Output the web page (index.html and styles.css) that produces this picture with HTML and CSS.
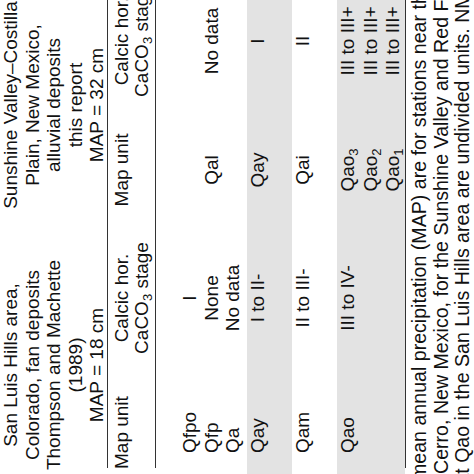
FILE: index.html
```html
<!DOCTYPE html>
<html>
<head>
<meta charset="utf-8">
<link rel="stylesheet" href="styles.css">
</head>
<body>
<div class="page">
  <div class="sheet">
    <div class="groups">
      <div class="grp">San Luis Hills area,<br>Colorado, fan deposits<br>Thompson and Machette<br>(1989)<br>MAP = 18 cm</div>
      <div class="grp">Sunshine Valley–Costilla<br>Plain, New Mexico,<br>alluvial deposits<br>this report<br>MAP = 32 cm</div>
    </div>
    <div class="rule"></div>
    <div class="row subhead">
      <div class="c1">Map unit</div>
      <div class="c2">Calcic hor.<br>CaCO<span class="sub">3</span> stage</div>
      <div class="c3">Map unit</div>
      <div class="c4">Calcic hor.<br>CaCO<span class="sub">3</span> stage</div>
    </div>
    <div class="rule"></div>
    <div class="row r1">
      <div class="c1">Qfpo<br>Qfp<br>Qa</div>
      <div class="c2">I<br>None<br>No data</div>
      <div class="c3 mid">Qal</div>
      <div class="c4 mid">No data</div>
    </div>
    <div class="row r2 shade">
      <div class="c1">Qay</div>
      <div class="c2">I to II-</div>
      <div class="c3">Qay</div>
      <div class="c4">I</div>
    </div>
    <div class="row r3">
      <div class="c1">Qam</div>
      <div class="c2">II to III-</div>
      <div class="c3">Qai</div>
      <div class="c4">II</div>
    </div>
    <div class="row r4 shade">
      <div class="c1">Qao</div>
      <div class="c2">III to IV-</div>
      <div class="c3">Qao<span class="sub">3</span><br>Qao<span class="sub">2</span><br>Qao<span class="sub">1</span></div>
      <div class="c4">III to III+<br>III to III+<br>III to III+</div>
    </div>
    <div class="rule"></div>
    <div class="foot">
      <div class="fl fl1">mean annual precipitation (MAP) are for stations near the town of</div>
      <div class="fl fl2">Cerro, New Mexico, for the Sunshine Valley and Red Fox area</div>
      <div class="fl fl3">that Qao in the San Luis Hills area are undivided units. NM, New Mexico.</div>
    </div>
  </div>
</div>
</body>
</html>
```
FILE: styles.css
```css
html, body {
  margin: 0;
  padding: 0;
  background: #fff;
}

.page {
  width: 474px;
  height: 474px;
  overflow: hidden;
}

.sheet {
  width: 474px;
  height: 474px;
  overflow: hidden;
  transform: rotate(-90deg);
  font-family: "Liberation Sans", Arial, sans-serif;
  font-size: 19px;
  line-height: 21.5px;
  color: #111;
  background: #fff;
}

.groups {
  display: grid;
  grid-template-columns: 218px 302px;
  height: 106.5px;
  text-align: center;
  white-space: nowrap;
}

.rule {
  height: 1.5px;
  margin-left: 6px;
  background: #333;
}

.row {
  display: grid;
  grid-template-columns: 88px 176px 80px 178px;
  white-space: nowrap;
  box-sizing: border-box;
}

.row > div {
  text-align: center;
}

.row > .c1 {
  text-align: left;
  padding-left: 21px;
}

.subhead {
  height: 46.5px;
  padding-top: 4.25px;
  line-height: 19.5px;
}

.subhead > .c1 {
  padding-left: 5px;
}

.r1 {
  height: 91px;
  padding-top: 23.25px;
}

.r1 > .mid {
  padding-top: 21.5px;
}

.r2,
.r3 {
  height: 45px;
}

.r4 {
  height: 67.5px;
  line-height: 22.5px;
}

.shade {
  background: #e3e3e3;
}

.sub {
  font-size: 13px;
  line-height: 0;
  vertical-align: -4px;
}

.foot {
  padding-top: 3.25px;
  white-space: nowrap;
  font-size: 19.6px;
}

.fl1 {
  margin-left: -6px;
}

.fl3 {
  margin-left: -27px;
}
```
